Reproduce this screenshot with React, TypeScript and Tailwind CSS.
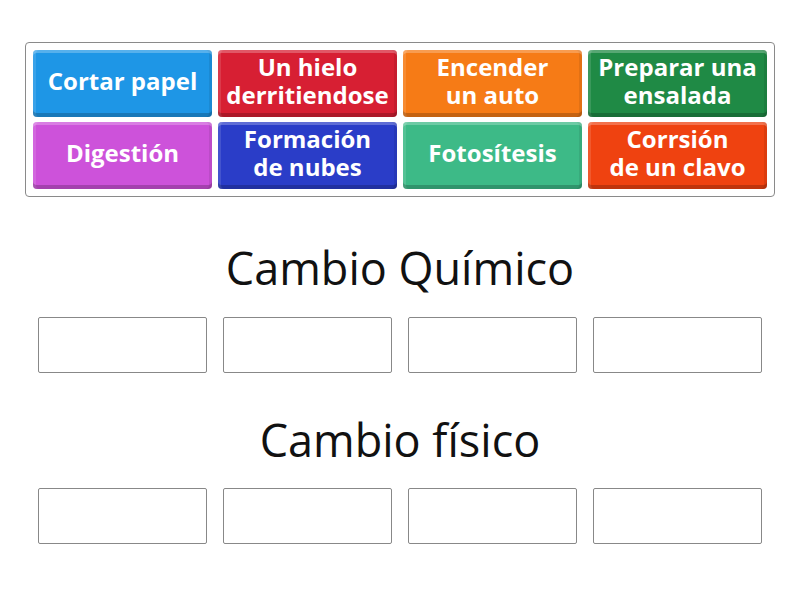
import React from "react";

const tiles = [
  { label: ["Cortar papel"], bg: "bg-[#1e96e6]" },
  { label: ["Un hielo", "derritiendose"], bg: "bg-[#d71f33]" },
  { label: ["Encender", "un auto"], bg: "bg-[#f67b16]" },
  { label: ["Preparar una", "ensalada"], bg: "bg-[#1f8a45]" },
  { label: ["Digestión"], bg: "bg-[#cd52da]" },
  { label: ["Formación", "de nubes"], bg: "bg-[#2a3dc8]" },
  { label: ["Fotosítesis"], bg: "bg-[#3dba87]" },
  { label: ["Corrsión", "de un clavo"], bg: "bg-[#ef4210]" },
];

function Tile({ label, bg }: { label: string[]; bg: string }) {
  return (
    <div
      className={`${bg} h-[67px] pb-[5px] rounded-[4px] flex flex-col items-center justify-center text-white font-bold text-[24px] leading-[28px] shadow-[inset_0_3px_0_rgba(255,255,255,0.25),inset_0_-4px_0_rgba(0,0,0,0.2),inset_3px_0_0_rgba(255,255,255,0.12),inset_-3px_0_0_rgba(0,0,0,0.08)]`}
    >
      {label.map((l) => (
        <span key={l}>{l}</span>
      ))}
    </div>
  );
}

function Slots() {
  return (
    <div className="grid grid-cols-4 gap-[16px] px-[38px]">
      {[0, 1, 2, 3].map((i) => (
        <div key={i} className="h-[56px] border border-[#888] rounded-[2px] bg-white" />
      ))}
    </div>
  );
}

export default function App() {
  return (
    <div className="w-[800px] h-[600px] bg-white font-['Open_Sans',sans-serif] pt-[42px]">
      {/* tile tray */}
      <div className="mx-[25px] border border-[#8a8a8a] rounded-[4px] p-[7px]">
        <div className="grid grid-cols-4 gap-x-[6px] gap-y-[5px]">
          {tiles.map((t, i) => (
            <Tile key={i} label={t.label} bg={t.bg} />
          ))}
        </div>
      </div>

      <h2 className="text-center text-[45px] leading-[60px] text-[#111] mt-[41px] mb-[19px]">
        Cambio Químico
      </h2>
      <Slots />

      <h2 className="text-center text-[45px] leading-[60px] text-[#111] mt-[37px] mb-[18px]">
        Cambio físico
      </h2>
      <Slots />
    </div>
  );
}
